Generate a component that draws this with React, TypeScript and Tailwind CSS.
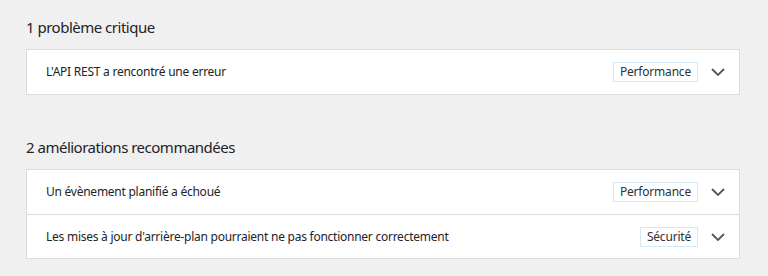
function Chevron() {
  return (
    <svg width="14" height="8" viewBox="0 0 14 8" fill="none" className="shrink-0">
      <path d="M1 1l6 6 6-6" stroke="#50575e" strokeWidth="1.8" />
    </svg>
  );
}

type Issue = { label: string; badge: string };

function IssueRow({ issue, first }: { issue: Issue; first: boolean }) {
  return (
    <div
      className={`flex h-[44px] items-center pl-[19px] pr-[14px] ${first ? "" : "border-t border-[#dcdcde]"}`}
    >
      <span className="flex-1 text-[12px] tracking-[-0.25px] text-[#1d2327]">{issue.label}</span>
      <span className="border border-[#d3e9f6] px-[6px] h-[20px] flex items-center text-[12px] tracking-[-0.2px] text-[#2c3338]">
        {issue.badge}
      </span>
      <span className="ml-[13px]">
        <Chevron />
      </span>
    </div>
  );
}

function Section({ title, issues }: { title: string; issues: Issue[] }) {
  return (
    <section>
      <h3 className="text-[15px] tracking-[-0.5px] leading-[24px] text-[#1d2327] mb-[10px]">{title}</h3>
      <div className="bg-white border border-[#dcdcde]">
        {issues.map((issue, i) => (
          <IssueRow key={issue.label} issue={issue} first={i === 0} />
        ))}
      </div>
    </section>
  );
}

export default function App() {
  return (
    <div
      className="min-h-[276px] bg-[#f0f0f1] pl-[26px] pr-[28px] pt-[15px]"
      style={{ fontFamily: '"Noto Sans", "Open Sans", sans-serif' }}
    >
      <div className="flex flex-col gap-[40px]">
        <Section
          title="1 problème critique"
          issues={[{ label: "L'API REST a rencontré une erreur", badge: "Performance" }]}
        />
        <Section
          title="2 améliorations recommandées"
          issues={[
            { label: "Un évènement planifié a échoué", badge: "Performance" },
            {
              label: "Les mises à jour d'arrière-plan pourraient ne pas fonctionner correctement",
              badge: "Sécurité",
            },
          ]}
        />
      </div>
    </div>
  );
}
